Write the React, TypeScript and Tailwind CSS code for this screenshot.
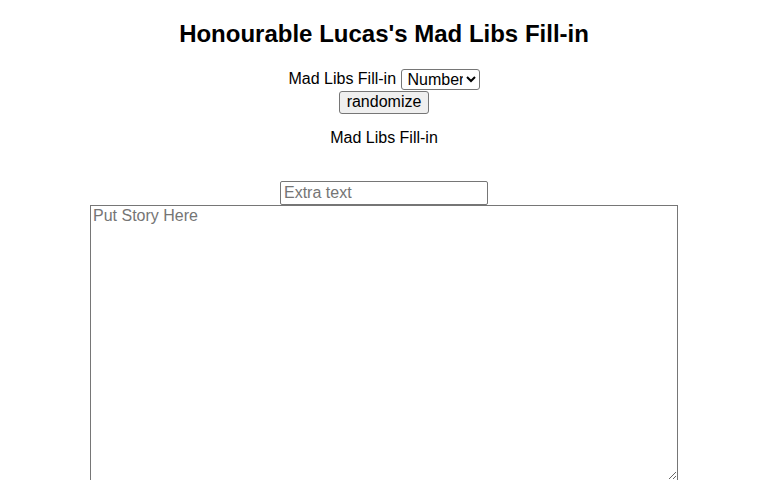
export default function App() {
  return (
    <div className="min-h-[480px] bg-white text-center text-black font-['Liberation_Sans',Arial,sans-serif] text-base leading-normal">
      <div className="px-2">
        <h2 className="pt-[20px] pb-[20px] text-2xl font-bold leading-[28px]">
          Honourable Lucas's Mad Libs Fill-in
        </h2>
        <div className="leading-[22px]">
          <label>
            Mad Libs Fill-in{" "}
            <select
              defaultValue="Number"
              className="h-[21px] w-[79px] rounded-[3px] border border-[#767676] bg-white pl-0.5 align-middle text-base leading-[18px]"
            >
              <option>Number</option>
              <option>Noun</option>
              <option>Verb</option>
              <option>Adjective</option>
            </select>
          </label>
        </div>
        <div>
          <button className="h-[23px] rounded-[3px] border border-[#767676] bg-[#efefef] px-[7px] text-base leading-[18px]">
            randomize
          </button>
        </div>
        <p className="mt-[15px] leading-[18px]">Mad Libs Fill-in</p>
        <div className="mt-[34px] flex flex-col items-center">
          <input
            type="text"
            placeholder="Extra text"
            className="h-[24px] w-[208px] rounded-[2px] border border-[#767676] px-[3px] text-base placeholder:text-[#757575]"
          />
          <textarea
            placeholder="Put Story Here"
            className="h-[276px] w-[588px] resize border border-[#767676] px-[2px] py-[1px] text-base leading-[18px] placeholder:text-[#757575]"
          />
        </div>
      </div>
    </div>
  );
}
